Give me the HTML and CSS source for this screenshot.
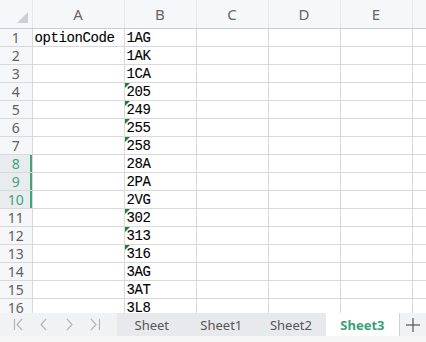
FILE: index.html
```html
<!DOCTYPE html>
<html lang="en">
<head>
  <meta charset="UTF-8">
  <title>Sheet3</title>
  <link rel="stylesheet" href="styles.css">
</head>
<body>
  <div class="sheet">
    <table class="grid">
      <colgroup>
        <col class="c-head">
        <col class="c-a">
        <col class="c-std">
        <col class="c-std">
        <col class="c-std">
        <col class="c-std">
        <col>
      </colgroup>
      <thead>
        <tr>
          <th class="corner"><span class="tri"></span></th>
          <th>A</th><th>B</th><th>C</th><th>D</th><th>E</th><th></th>
        </tr>
      </thead>
      <tbody>
        <tr><th>1</th><td>optionCode</td><td>1AG</td><td></td><td></td><td></td><td></td></tr>
        <tr><th>2</th><td></td><td>1AK</td><td></td><td></td><td></td><td></td></tr>
        <tr><th>3</th><td></td><td>1CA</td><td></td><td></td><td></td><td></td></tr>
        <tr><th>4</th><td></td><td class="txt">205</td><td></td><td></td><td></td><td></td></tr>
        <tr><th>5</th><td></td><td class="txt">249</td><td></td><td></td><td></td><td></td></tr>
        <tr><th>6</th><td></td><td class="txt">255</td><td></td><td></td><td></td><td></td></tr>
        <tr><th>7</th><td></td><td class="txt">258</td><td></td><td></td><td></td><td></td></tr>
        <tr class="sel"><th>8</th><td></td><td>28A</td><td></td><td></td><td></td><td></td></tr>
        <tr class="sel"><th>9</th><td></td><td>2PA</td><td></td><td></td><td></td><td></td></tr>
        <tr class="sel"><th>10</th><td></td><td>2VG</td><td></td><td></td><td></td><td></td></tr>
        <tr><th>11</th><td></td><td class="txt">302</td><td></td><td></td><td></td><td></td></tr>
        <tr><th>12</th><td></td><td class="txt">313</td><td></td><td></td><td></td><td></td></tr>
        <tr><th>13</th><td></td><td class="txt">316</td><td></td><td></td><td></td><td></td></tr>
        <tr><th>14</th><td></td><td>3AG</td><td></td><td></td><td></td><td></td></tr>
        <tr><th>15</th><td></td><td>3AT</td><td></td><td></td><td></td><td></td></tr>
        <tr><th>16</th><td></td><td>3L8</td><td></td><td></td><td></td><td></td></tr>
        <tr><th>17</th><td></td><td></td><td></td><td></td><td></td><td></td></tr>
      </tbody>
    </table>
  </div>

  <div class="tabbar">
    <div class="nav">
      <svg width="117" height="23" viewBox="0 0 117 23">
        <g fill="none" stroke="#b4b6ba" stroke-width="1.2">
          <line x1="14.5" y1="6" x2="14.5" y2="17"/>
          <polyline points="22,6 17,11.5 22,17"/>
          <polyline points="46,6 41,11.5 46,17"/>
          <polyline points="67,6 72,11.5 67,17"/>
          <polyline points="91,6 96,11.5 91,17"/>
          <line x1="99.5" y1="6" x2="99.5" y2="17"/>
        </g>
      </svg>
    </div>
    <div class="tab">Sheet</div>
    <div class="tab">Sheet1</div>
    <div class="tab">Sheet2</div>
    <div class="tab active">Sheet3</div>
    <div class="add">
      <svg width="14" height="14" viewBox="0 0 14 14">
        <g stroke="#555" stroke-width="1.2">
          <line x1="7" y1="0" x2="7" y2="14"/>
          <line x1="0" y1="7" x2="14" y2="7"/>
        </g>
      </svg>
    </div>
  </div>
  <div class="status"></div>
</body>
</html>
```

FILE: styles.css
```css
body {
  margin: 0;
  background: #fff;
  font-family: "Noto Sans", sans-serif;
}
.sheet {
  height: 313px;
  overflow: hidden;
}
.grid {
  border-collapse: collapse;
  table-layout: fixed;
  width: 460px;
}
.c-head { width: 32px; }
.c-a { width: 92px; }
.c-std { width: 72px; }
.grid th,
.grid td {
  height: 17px;
  padding: 0;
  border: 1px solid #d8d9dc;
  border-top: none;
  border-left: none;
  overflow: hidden;
  white-space: nowrap;
}
thead th {
  height: 28px !important;
  background: #f6f7f9;
  border-bottom: 1px solid #c9ccd1 !important;
  border-right: 1px solid #e4e6e9 !important;
  font-weight: normal;
  font-size: 15px;
  color: #666;
  line-height: 28px;
}
.corner {
  position: relative;
}
.tri {
  position: absolute;
  right: 4px;
  bottom: 5px;
  width: 0;
  height: 0;
  border-left: 11px solid transparent;
  border-bottom: 11px solid #cdcfd2;
}
tbody th {
  background: #f6f7f9;
  font-weight: normal;
  font-size: 14px;
  color: #5f5f5f;
  line-height: 17px;
  border-right: 1px solid #d8d9dc;
}
tbody tr.sel th {
  background: #e9ecee;
  color: #3fa37e;
  box-shadow: inset -2px 0 0 #3fa37e;
}
.grid td {
  font-family: "Liberation Mono", monospace;
  font-size: 14px;
  letter-spacing: -0.4px;
  color: #000;
  line-height: 16px;
  padding-left: 2px;
  vertical-align: bottom;
  position: relative;
  -webkit-text-stroke: 0.1px #000;
}
.grid td.txt::before {
  content: "";
  position: absolute;
  left: 0;
  top: 0;
  border-top: 5px solid #237c3a;
  border-right: 5px solid transparent;
}
.tabbar {
  display: flex;
  height: 23px;
  background: #e8e9ed;
  font-size: 13px;
  color: #555;
}
.nav {
  width: 117px;
  background: #f1f2f4;
}
.nav svg {
  display: block;
}
.tab {
  width: 70px;
  text-align: center;
  line-height: 24px;
}
.tab.active {
  width: 74px;
  background: #fff;
  color: #3a9f77;
  font-weight: bold;
}
.add {
  width: 26px;
  border-left: 1px solid #d0d2d6;
  display: flex;
  align-items: center;
  justify-content: center;
  background: #f1f2f4;
}
.status {
  height: 6px;
  background: #f5f5f6;
}
```
